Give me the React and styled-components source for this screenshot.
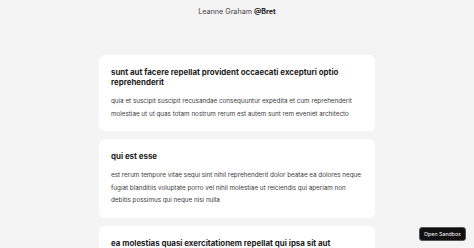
import React from 'react'
import styled, { createGlobalStyle } from 'styled-components';

const GlobalStyle = createGlobalStyle`
  body {
    margin:0;
    background:#f4f4f4;
    font-family:Inter, "Noto Sans", sans-serif;
  }
`;

const Page = styled.div`
  height:248px;
  overflow:hidden;
  display:flex;
  flex-direction:column;
  align-items:center;
`;

const Header = styled.div`
  flex:none;
  padding-top:7px;
  height:55px;
  box-sizing:border-box;
  font-size:7.2px;
  color:#444;
`;

const User = styled.b`
  color:#222;
  font-weight:700;
`;

const List = styled.div`
  flex:none;
  width:276px;
  display:flex;
  flex-direction:column;
  gap:8px;
`;

const Card = styled.div`
  background:#fff;
  border-radius:6px;
  padding:12px 12px 11px;
`;

const Title = styled.h2`
  margin:0 0 8px;
  font-size:7.9px;
  line-height:10px;
  font-weight:700;
  color:#1c1c1c;
`;

const Body = styled.p`
  margin:0;
  font-size:6.3px;
  line-height:12.5px;
  color:#3a3a3a;
`;

const SandboxButton = styled.button`
  position:fixed;
  right:8px;
  bottom:7px;
  height:14px;
  padding:0 4px;
  background:#111;
  color:#fff;
  border:1px solid #555;
  border-radius:3px;
  font-family:Inter, sans-serif;
  font-size:5.3px;
`;

const posts = [
  {
    title: 'sunt aut facere repellat provident occaecati excepturi optio reprehenderit',
    body: 'quia et suscipit suscipit recusandae consequuntur expedita et cum reprehenderit molestiae ut ut quas totam nostrum rerum est autem sunt rem eveniet architecto',
  },
  {
    title: 'qui est esse',
    body: 'est rerum tempore vitae sequi sint nihil reprehenderit dolor beatae ea dolores neque fugiat blanditiis voluptate porro vel nihil molestiae ut reiciendis qui aperiam non debitis possimus qui neque nisi nulla',
  },
  {
    title: 'ea molestias quasi exercitationem repellat qui ipsa sit aut',
    body: 'et iusto sed quo iure voluptatem occaecati omnis eligendi aut ad voluptatem doloribus vel accusantium quis pariatur molestiae porro eius odio et labore et velit aut',
  },
];

export default function App() {
  return (
    <Page>
      <GlobalStyle />
      <Header>Leanne Graham <User>@Bret</User></Header>
      <List>
        {posts.map((p, i) => (
          <Card key={i}>
            <Title>{p.title}</Title>
            <Body>{p.body}</Body>
          </Card>
        ))}
      </List>
      <SandboxButton>Open Sandbox</SandboxButton>
    </Page>
  )
}
